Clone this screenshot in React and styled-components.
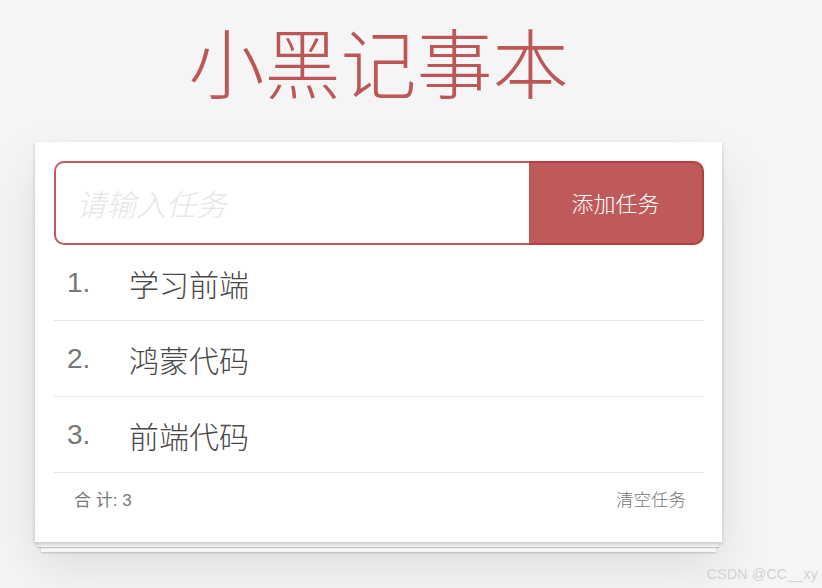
import styled, { createGlobalStyle } from 'styled-components';

const GlobalStyle = createGlobalStyle`
  html, body {
    margin: 0;
    padding: 0;
    background: #f5f5f5;
    font-family: "Liberation Sans", "Noto Sans CJK SC", sans-serif;
  }
  #root {
    min-height: 588px;
  }
`;

const cjkLight = `"Noto Sans CJK SC Light", "Noto Sans CJK SC DemiLight", "Noto Sans CJK SC", sans-serif`;

const todos = [
  { id: 1, name: '学习前端' },
  { id: 2, name: '鸿蒙代码' },
  { id: 3, name: '前端代码' },
];

function App() {
  return (
    <>
      <GlobalStyle />
      <StPage>
        <StSection>
          <StTitle>小黑记事本</StTitle>
          <StCard>
            <StInputGroup>
              <StInput placeholder="请输入任务" />
              <StAddBtn>添加任务</StAddBtn>
            </StInputGroup>
            <StList>
              {todos.map((item, index) => (
                <StItem key={item.id}>
                  <StIndex>{index + 1}.</StIndex>
                  <StLabel>{item.name}</StLabel>
                </StItem>
              ))}
            </StList>
            <StFooter>
              <StCount>合 计: {todos.length}</StCount>
              <StClearBtn>清空任务</StClearBtn>
            </StFooter>
          </StCard>
        </StSection>
        <StWatermark>CSDN @CC__xy</StWatermark>
      </StPage>
    </>
  );
}

export default App;

const StPage = styled.div`
  position: relative;
  height: 588px;
  padding: 22px 0 0 35px;
  box-sizing: border-box;
`;
const StSection = styled.section`
  width: 687px;
  display: flex;
  flex-direction: column;
`;
const StTitle = styled.h1`
  margin: 0 0 44px;
  text-align: center;
  font-family: ${cjkLight};
  font-size: 76px;
  font-weight: 200;
  line-height: 76px;
  color: #bd5757;
`;
const StCard = styled.div`
  background: #fff;
  padding: 19px 18px 0 19px;
  box-shadow:
    0 2px 4px 0 rgba(0, 0, 0, 0.2),
    0 8px 0 -3px #f6f6f6,
    0 9px 1px -3px rgba(0, 0, 0, 0.2),
    0 16px 0 -6px #f6f6f6,
    0 17px 2px -6px rgba(0, 0, 0, 0.2),
    0 25px 50px 0 rgba(0, 0, 0, 0.1);
`;
const StInputGroup = styled.div`
  display: flex;
  height: 84px;
`;
const StInput = styled.input`
  flex: 1;
  min-width: 0;
  box-sizing: border-box;
  border: 2px solid #c05a5c;
  border-right: none;
  border-radius: 10px 0 0 10px;
  padding: 0 20px;
  outline: none;
  font-family: ${cjkLight};
  font-weight: 300;
  font-size: 30px;
  font-style: italic;
  color: #484848;
  &::placeholder {
    color: #e6e6e6;
  }
`;
const StAddBtn = styled.button`
  width: 175px;
  box-sizing: border-box;
  border: 2px solid #b5403f;
  border-left: none;
  border-radius: 0 10px 10px 0;
  padding: 0 0 3px;
  background: #bf5a5a;
  color: #fff;
  font-family: ${cjkLight};
  font-weight: 300;
  font-size: 22px;
  cursor: pointer;
`;
const StList = styled.ul`
  list-style: none;
  margin: 0;
  padding: 0;
`;
const StItem = styled.li`
  display: flex;
  align-items: center;
  height: 75px;
  padding-left: 13px;
  border-bottom: 1px solid #e6e6e6;
  font-size: 28px;
`;
const StIndex = styled.span`
  width: 62px;
  color: #777;
  font-family: "Liberation Sans", sans-serif;
`;
const StLabel = styled.span`
  color: #484848;
  font-family: ${cjkLight};
  font-weight: 300;
  font-size: 30px;
`;
const StFooter = styled.div`
  display: flex;
  justify-content: space-between;
  align-items: flex-start;
  height: 69px;
  box-sizing: border-box;
  padding: 13px 18px 0 20px;
  font-size: 17px;
  color: #777;
`;
const StCount = styled.span``;
const StClearBtn = styled.button`
  border: none;
  background: none;
  padding: 0;
  color: #777;
  font-family: ${cjkLight};
  font-weight: 300;
  font-size: 17.5px;
  cursor: pointer;
`;
const StWatermark = styled.div`
  position: absolute;
  right: 4px;
  bottom: 6px;
  font-family: "Liberation Sans", sans-serif;
  font-size: 14px;
  letter-spacing: 0.3px;
  color: #d2d2d2;
`;
